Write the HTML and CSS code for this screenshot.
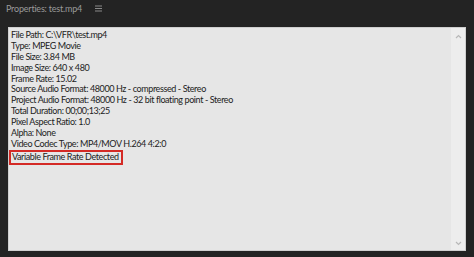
FILE: index.html
```html
<!DOCTYPE html>
<html>
<head>
<meta charset="utf-8">
<link rel="stylesheet" href="styles.css">
</head>
<body>
<div class="header">
  <span class="title">Properties: test.mp4</span>
  <svg class="menu" width="7" height="7" viewBox="0 0 7 7"><rect x="0" y="0.5" width="7" height="1" fill="#8a8a8a"/><rect x="0" y="3" width="7" height="1" fill="#8a8a8a"/><rect x="0" y="5.5" width="7" height="1" fill="#8a8a8a"/></svg>
</div>
<div class="panel">
  <div class="content">
    <div class="line">File Path: C:\VFR\test.mp4</div>
    <div class="line">Type: MPEG Movie</div>
    <div class="line">File Size: 3.84 MB</div>
    <div class="line">Image Size: 640 x 480</div>
    <div class="line">Frame Rate: 15.02</div>
    <div class="line">Source Audio Format: 48000 Hz - compressed - Stereo</div>
    <div class="line">Project Audio Format: 48000 Hz - 32 bit floating point - Stereo</div>
    <div class="line">Total Duration: 00;00;13;25</div>
    <div class="line">Pixel Aspect Ratio: 1.0</div>
    <div class="line">Alpha: None</div>
    <div class="line">Video Codec Type: MP4/MOV H.264 4:2:0</div>
    <div class="line"><span class="highlight">Variable Frame Rate Detected</span></div>
  </div>
  <div class="scrollbar">
    <svg width="7" height="5" viewBox="0 0 7 5"><path d="M1 4 L3.5 1.5 L6 4" fill="none" stroke="#b8b8b8" stroke-width="1.2"/></svg>
    <svg width="7" height="5" viewBox="0 0 7 5"><path d="M1 1 L3.5 3.5 L6 1" fill="none" stroke="#b8b8b8" stroke-width="1.2"/></svg>
  </div>
</div>
</body>
</html>
```
FILE: styles.css
```css
html, body {
  margin: 0;
  padding: 0;
  background: #232323;
  width: 474px;
  height: 257px;
  overflow: hidden;
  font-family: Lato, "Liberation Sans", sans-serif;
}
.header {
  height: 17px;
  display: flex;
  align-items: center;
  padding-left: 6px;
  gap: 13px;
}
.title {
  color: #9a9a9a;
  font-size: 9px;
  letter-spacing: -0.2px;
}
.menu {
  display: block;
}
.panel {
  margin: 10px 0 0 8px;
  width: 456px;
  height: 222px;
  background: #e6e6e6;
  border: 1px solid #cfcfcf;
  display: flex;
}
.content {
  flex: 1;
  padding: 2px 0 0 2px;
  color: #222222;
  font-size: 9px;
  letter-spacing: -0.4px;
}
.line {
  height: 10.9px;
  line-height: 10.9px;
  white-space: nowrap;
}
.highlight {
  display: inline-block;
  border: 2px solid #d42a25;
  padding: 0 2px 1px 1px;
  margin-left: -2px;
  line-height: 10px;
}
.scrollbar {
  width: 14px;
  background: #ededed;
  display: flex;
  flex-direction: column;
  justify-content: space-between;
  align-items: center;
  padding: 6px 0 4px;
  box-sizing: border-box;
}
.scrollbar svg {
  display: block;
}
```
